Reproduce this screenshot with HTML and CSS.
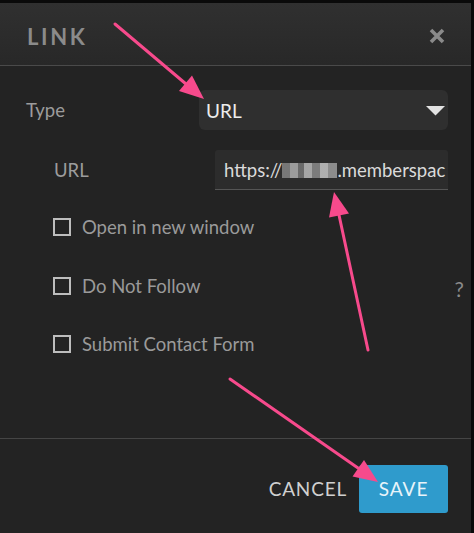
FILE: index.html
```html
<!DOCTYPE html>
<html>
<head>
<meta charset="utf-8">
<link rel="stylesheet" href="styles.css">
</head>
<body>
<div class="dialog">
  <div class="header">
    <span class="title">LINK</span>
    <svg class="close" width="16" height="16" viewBox="0 0 16 16"><path d="M2 2L14 14M14 2L2 14" stroke="#8a8a8a" stroke-width="3.6" stroke-linecap="butt"/></svg>
  </div>
  <div class="body">
    <div class="row type-row">
      <span class="label">Type</span>
      <div class="select">
        <span>URL</span>
        <svg width="19" height="10" viewBox="0 0 19 10"><path d="M0 0H19L9.5 9.5Z" fill="#e2e2e2"/></svg>
      </div>
    </div>
    <div class="row url-row">
      <span class="label sub">URL</span>
      <div class="input"><span>https://</span><span class="blur"></span><span>.memberspac</span></div>
    </div>
    <div class="check"><span class="box"></span><span>Open in new window</span></div>
    <div class="check"><span class="box"></span><span>Do Not Follow</span><span class="help">?</span></div>
    <div class="check"><span class="box"></span><span>Submit Contact Form</span></div>
  </div>
  <div class="footer">
    <span class="cancel">CANCEL</span>
    <span class="save">SAVE</span>
  </div>
</div>
<svg class="arrows" width="474" height="533" viewBox="0 0 474 533">
  <g stroke="#f74a8c" stroke-width="3" fill="none" stroke-linecap="round">
    <path d="M115 24L186 84"/>
    <path d="M368 350L339 215"/>
    <path d="M230 379L358 468"/>
  </g>
  <g fill="#f74a8c">
    <path d="M204 99L179 91L192 75.5Z"/>
    <path d="M334 192L349 213.5L329 217.5Z"/>
    <path d="M378 482L352.5 476.5L364 460Z"/>
  </g>
</svg>
</body>
</html>
```

FILE: styles.css
```css
html, body {
  margin: 0;
  padding: 0;
  background: #0a0a0a;
  width: 474px;
  height: 533px;
  overflow: hidden;
  font-family: Lato, "Open Sans", sans-serif;
}
.dialog {
  margin-top: 3px;
  width: 471px;
  height: 530px;
  background: #232323;
  display: flex;
  flex-direction: column;
}
.header {
  height: 62px;
  border-bottom: 1px solid #4a4a4a;
  background: linear-gradient(#303030, #282828);
  display: flex;
  align-items: center;
  justify-content: space-between;
  padding: 0 26px 0 27px;
  flex: none;
}
.title {
  color: #8b8b8b;
  font-weight: 700;
  font-size: 22px;
  letter-spacing: 2.6px;
  margin-top: 4px;
}
.close { margin-top: 4px; }
.body {
  padding: 24px 23px 0 26px;
  height: 348px;
  flex: none;
  border-bottom: 1px solid #454545;
}
.row {
  display: flex;
  align-items: center;
  height: 40px;
}
.url-row { margin-top: 20px; }
.label {
  color: #9c9c9c;
  font-size: 18.5px;
  width: 173px;
  flex: none;
}
.label.sub {
  padding-left: 28px;
  width: 161px;
}
.select {
  flex: 1;
  height: 40px;
  background: #2f2f2f;
  border-radius: 6px;
  display: flex;
  align-items: center;
  justify-content: space-between;
  padding: 0 3px 0 7px;
  color: #ececec;
  font-size: 19px;
}
.select svg { margin-top: 2px; }
.input {
  flex: 1;
  height: 39px;
  background: #2c2c2c;
  border-bottom: 1px solid #555;
  border-radius: 3px 3px 0 0;
  display: flex;
  align-items: center;
  padding-left: 9px;
  color: #dadada;
  font-size: 18.5px;
  overflow: hidden;
  white-space: nowrap;
}
.blur {
  display: inline-block;
  width: 55px;
  height: 15px;
  flex: none;
  margin-top: 1px;
  background:
    linear-gradient(90deg, #8a8a8a 0 8px, #b8b8b8 8px 16px, #7a7a7a 16px 22px, #c4c4c4 22px 30px, #909090 30px 38px, #cfcfcf 38px 46px, #a4a4a4 46px 55px);
  opacity: 0.8;
}
.check {
  display: flex;
  align-items: center;
  height: 58.5px;
  padding-left: 27px;
  color: #9a9a9a;
  font-size: 18.5px;
}
.url-row + .check { margin-top: 8px; }
.box {
  width: 14px;
  height: 14px;
  border: 2px solid #bdbdbd;
  margin-right: 11px;
  flex: none;
}
.help {
  margin-left: auto;
  margin-right: -16px;
  color: #8a8a8a;
  font-size: 21px;
  margin-top: 6px;
}
.footer {
  flex: 1;
  display: flex;
  align-items: flex-start;
  justify-content: flex-end;
  padding: 26px 23px 0 0;
  gap: 12px;
}
.cancel {
  color: #d0d0d0;
  font-size: 19px;
  letter-spacing: 0.8px;
  line-height: 48px;
}
.save {
  background: #2f9bcc;
  color: #e8f4fa;
  font-size: 19px;
  letter-spacing: 1px;
  height: 48px;
  line-height: 48px;
  width: 89px;
  text-align: center;
  border-radius: 3px;
}
.arrows {
  position: absolute;
  left: 0;
  top: 0;
  pointer-events: none;
}
```
